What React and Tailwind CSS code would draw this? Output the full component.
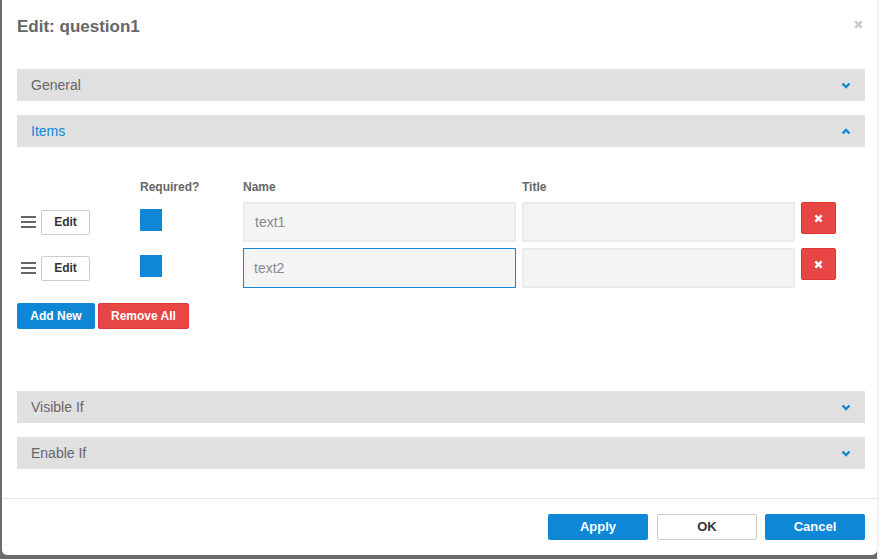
import React from 'react'

const font = { fontFamily: '"Liberation Sans", Arial, sans-serif' }

function Chevron({ up }) {
  return (
    <svg width="10" height="7" viewBox="0 0 10 7" className="text-[#0d87d6]">
      <polyline
        points={up ? '1.5,5.5 5,2 8.5,5.5' : '1.5,1.5 5,5 8.5,1.5'}
        fill="none"
        stroke="currentColor"
        strokeWidth="2.4"
      />
    </svg>
  )
}

function Cross({ size, className }) {
  return (
    <svg width={size} height={size} viewBox="0 0 10 10" className={className}>
      <path d="M1.5 1.5 L8.5 8.5 M8.5 1.5 L1.5 8.5" stroke="currentColor" strokeWidth="2.6" />
    </svg>
  )
}

function Bar({ title, open, active }) {
  return (
    <div className="flex h-[32px] w-[848px] items-center justify-between bg-[#e0e0e0] pl-[14px] pr-[14px]">
      <span className={`text-[14px] ${active ? 'text-[#0d87d6]' : 'text-[#666]'}`}>{title}</span>
      <Chevron up={open} />
    </div>
  )
}

function Row({ name, focused }) {
  return (
    <div className="flex items-start">
      <div className="flex h-[40px] w-[123px] items-center pl-[4px]">
        <div className="flex w-[15px] flex-col gap-[3px]">
          <div className="h-[2px] bg-[#666]" />
          <div className="h-[2px] bg-[#666]" />
          <div className="h-[2px] bg-[#666]" />
        </div>
        <button className="ml-[5px] h-[25px] w-[49px] rounded-[2px] border border-[#ccc] bg-white text-[12px] font-bold text-[#333]">
          Edit
        </button>
      </div>
      <div className="flex h-[40px] w-[103px] items-center">
        <div className="-mt-[4px] h-[22px] w-[22px] bg-[#0d87d6]" />
      </div>
      <div className="w-[279px]">
        <div
          className={`flex h-[40px] w-[273px] items-center bg-[#f4f4f4] px-[10px] text-[14px] text-[#888] ${
            focused ? 'border border-[#0d87d6]' : 'border-2 border-[#ebebeb]'
          }`}
        >
          {name}
        </div>
      </div>
      <div className="w-[279px]">
        <div className="h-[40px] w-[273px] border-2 border-[#ebebeb] bg-[#f4f4f4]" />
      </div>
      <button className="flex h-[32px] w-[35px] items-center justify-center rounded-[2px] border border-[#e03434] bg-[#e84545]">
        <Cross size={9} className="text-white" />
      </button>
    </div>
  )
}

export default function App() {
  return (
    <div className="flex h-[559px] w-[879px] bg-[#f4f4f4]" style={font}>
      <div className="flex h-[559px] w-[877px] flex-col bg-[#6b6b6b] pl-[2px] pb-[4px]">
        <div className="flex h-[555px] flex-col rounded-bl-[5px] rounded-br-[5px] bg-white">
          <div className="flex items-center justify-between pl-[15px] pr-[14px] pt-[17px]">
            <h1 className="text-[17px] font-bold leading-[20px] text-[#666]">Edit: question1</h1>
            <Cross size={9} className="-mt-[6px] text-[#c8c8c8]" />
          </div>

          <div className="flex flex-col pl-[15px] pt-[32px]">
            <Bar title="General" />
            <div className="h-[14px]" />
            <Bar title="Items" open active />

            <div className="pt-[33px]">
              <div className="flex text-[12px] font-bold leading-[14px] text-[#666]">
                <div className="w-[123px]" />
                <div className="w-[103px]">Required?</div>
                <div className="w-[279px]">Name</div>
                <div className="w-[279px]">Title</div>
              </div>
              <div className="mt-[8px] flex flex-col gap-[6px]">
                <Row name="text1" />
                <Row name="text2" focused />
              </div>
              <div className="mt-[15px] flex gap-[3px]">
                <button className="h-[26px] w-[78px] rounded-[2px] bg-[#0d87d6] text-[12px] font-bold text-white">
                  Add New
                </button>
                <button className="h-[26px] w-[91px] rounded-[2px] border border-[#e03434] bg-[#e84545] text-[12px] font-bold text-white">
                  Remove All
                </button>
              </div>
            </div>

            <div className="h-[62px]" />
            <Bar title="Visible If" />
            <div className="h-[14px]" />
            <Bar title="Enable If" />
          </div>

          <div className="mt-[29px] flex flex-1 items-start justify-end gap-[8px] border-t border-[#e4e4e4] pr-[12px] pt-[15px]">
            <button className="h-[26px] w-[100px] rounded-[2px] bg-[#0d87d6] text-[13px] font-bold text-white">
              Apply
            </button>
            <button className="ml-[1px] h-[26px] w-[100px] rounded-[2px] border border-[#ccc] bg-white text-[13px] font-bold text-[#333]">
              OK
            </button>
            <button className="h-[26px] w-[100px] rounded-[2px] bg-[#0d87d6] text-[13px] font-bold text-white">
              Cancel
            </button>
          </div>
        </div>
      </div>
    </div>
  )
}
